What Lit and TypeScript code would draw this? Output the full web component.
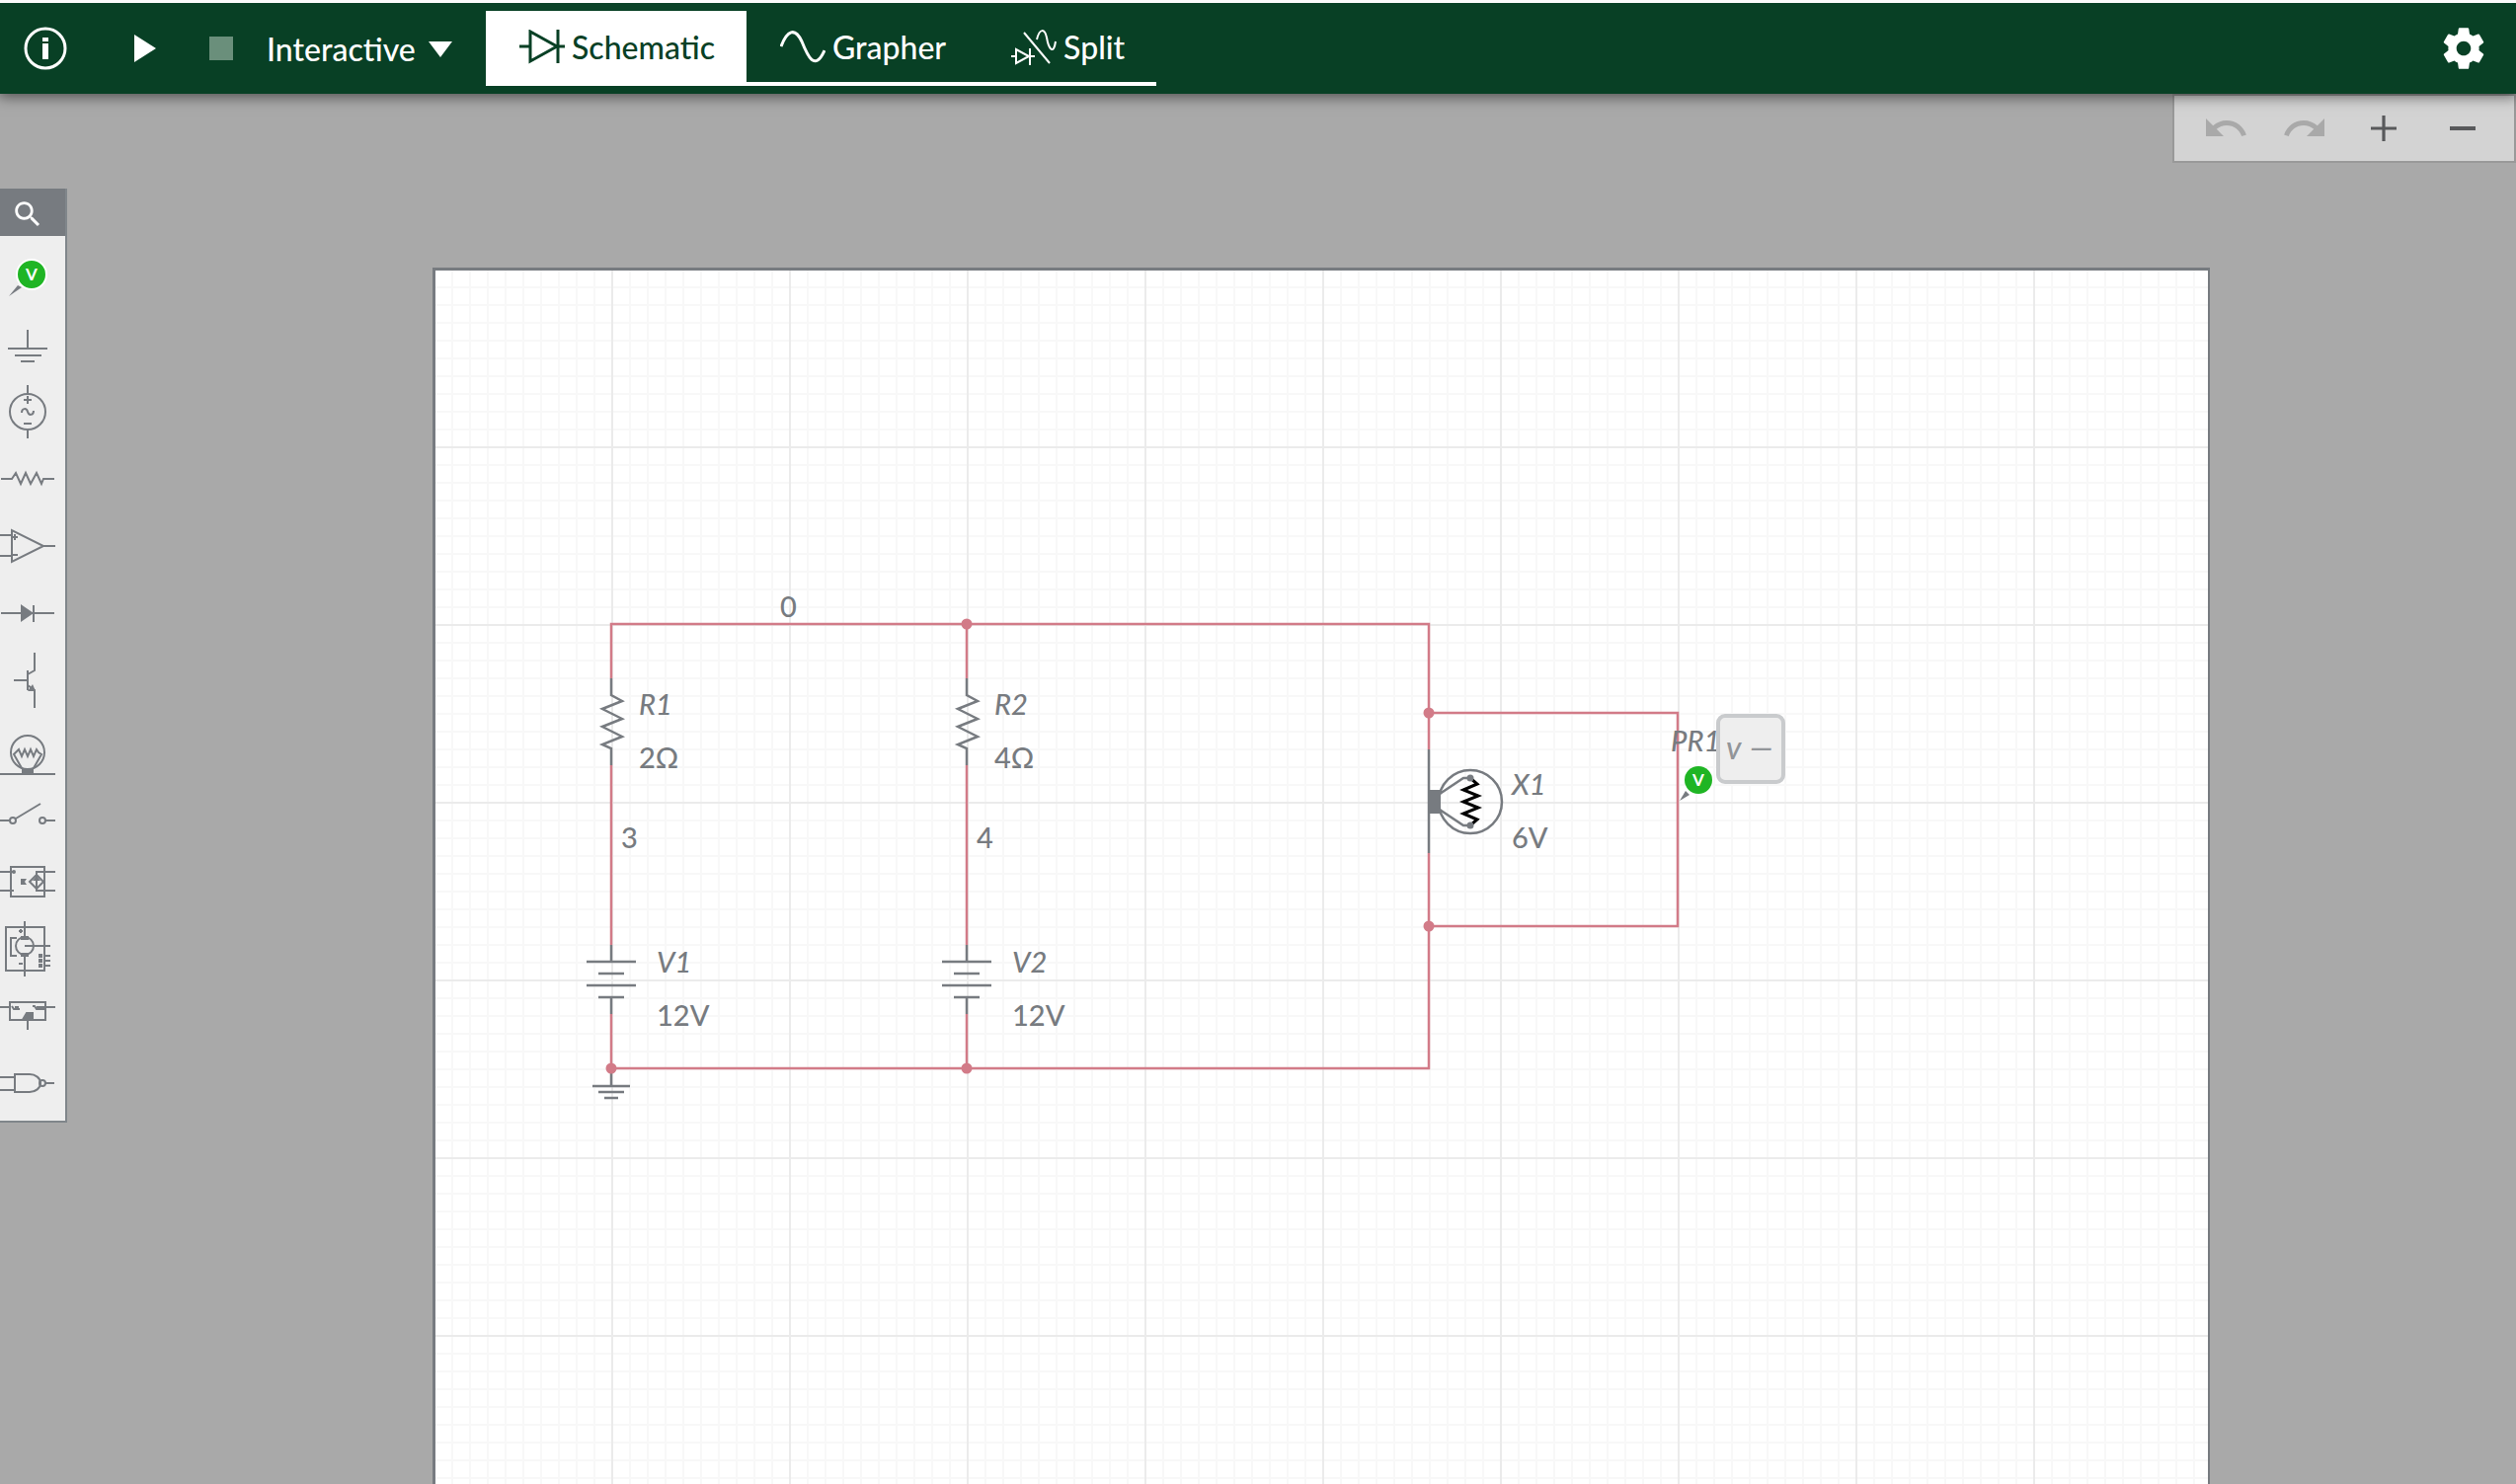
import { LitElement, html, css, svg } from "lit";
import { customElement, state } from "lit/decorators.js";

type Glyph = ReturnType<typeof svg>;

interface Part {
  name: string;
  glyph: Glyph;
}

const PARTS: Part[] = [
  {
    name: "Voltage probe",
    glyph: svg`
      <path class="fill" d="M9 53 L18 42 L22 44 Z" />
      <circle cx="32" cy="31" r="15" fill="#1fb524" stroke="#fff" stroke-width="2" />
      <text class="probe" x="32" y="37" text-anchor="middle">V</text>`,
  },
  {
    name: "Ground",
    glyph: svg`<path d="M28 19 V38 M8 38 H48 M15 45 H42 M21 51 H35" />`,
  },
  {
    name: "Sources",
    glyph: svg`
      <circle cx="28" cy="34" r="18" />
      <path d="M28 7 V16 M28 52 V61 M24 22 H32 M28 18 V26 M24 46 H32" />
      <path d="M22 35 C22 30 27 30 28 34 S34 38 34 33" />`,
  },
  {
    name: "Passive",
    glyph: svg`<path d="M1 34 H12 L16 28 L21 39 L26 28 L31 39 L37 28 L42 39 L44 34 H55" />`,
  },
  {
    name: "Analog",
    glyph: svg`
      <path d="M12 18 V50 L44 34 Z M44 34 H56 M0 23 H12 M0 44 H12" />
      <path d="M13 25 H18 M15 22 V28 M13 43 H18" />`,
  },
  {
    name: "Diodes",
    glyph: svg`
      <path d="M1 34 H55 M34 26 V43" />
      <path class="fill" d="M21 25 L34 34 L21 43 Z" />`,
  },
  {
    name: "Transistors",
    glyph: svg`
      <path d="M35 6 V24 L28 28 M28 24 V44 M14 34 H28 M28 39 L35 44 V62" />
      <path class="fill" d="M36 45 L28 45 L33 38 Z" />`,
  },
  {
    name: "Indicators",
    glyph: svg`
      <circle cx="28" cy="39" r="17" />
      <path d="M0 61 H56" />
      <rect class="fill" x="22" y="55" width="12" height="6" />
      <path d="M22 55 L14 41 L17 38 L19 36 L22 43 L25 36 L28 43 L31 36 L34 43 L37 36 L39 39 L42 41 L34 55" />`,
  },
  {
    name: "Switches",
    glyph: svg`
      <circle cx="13" cy="40" r="3" />
      <circle cx="43" cy="40" r="3" />
      <path d="M0 40 H10 M46 40 H56 M16 38 L41 23" />`,
  },
  {
    name: "Modeling blocks",
    glyph: svg`
      <path d="M11 19 H45 V49 H11 Z M0 24 H14 M0 43 H14" />
      <path d="M56 24 H37 V43 H56 M30 34 L37 27 L44 34 L37 41 Z" />
      <path class="fill" d="M33 33 L37 28 L41 33 Z M21 31 h6 l-2 3 l2 3 h-6 Z" />
      <circle class="fill" cx="14" cy="24" r="2" />`,
  },
  {
    name: "Electromechanical",
    glyph: svg`
      <path d="M6 12 H45 V56 H6 Z M25 6 V22 M25 40 V62 M25 31 H51" />
      <circle cx="25" cy="31" r="9" />
      <path d="M17 23 H11 V41 H17 M45 41 H51 M45 46 H51 M45 51 H51" />
      <path d="M21 23 H29 M21 40 H29" stroke-width="4" />
      <path d="M19 16 H23 M21 14 V18 M19 49 H23" />
      <path d="M41 39 V53" stroke-width="4" stroke-dasharray="4 1" />`,
  },
  {
    name: "Power",
    glyph: svg`
      <path d="M10 20 H46 V38 H10 Z M0 25 H10 M46 25 H56 M28 38 V48" />
      <path d="M12 24 L14 27 H20 M33 24 H35 L37 27 H44 V24 M24 36 L27 31 H33 V36 Z" />
      <path d="M15 26 H19 M37 26 H43 M26 34 H33" stroke-width="4" />`,
  },
  {
    name: "Digital",
    glyph: svg`
      <path d="M15 25 H30 C36 25 41 29 41 34 S36 43 30 43 H15 Z M0 28 H15 M0 41 H15 M46 34 H55" />
      <circle cx="43" cy="34" r="3" />`,
  },
];

const UNDO =
  "M12.5 8c-2.65 0-5.05.99-6.9 2.6L2 7v9h9l-3.62-3.62c1.39-1.16 3.16-1.88 5.12-1.88 3.54 0 6.55 2.31 7.6 5.5l2.37-.78C21.08 11.03 17.15 8 12.5 8z";
const REDO =
  "M18.4 10.6C16.55 8.99 14.15 8 11.5 8c-4.65 0-8.58 3.03-9.96 7.22L3.9 16c1.05-3.19 4.05-5.5 7.6-5.5 1.95 0 3.73.72 5.12 1.88L13 16h9V7l-3.6 3.6z";
const GEAR =
  "M19.43 12.98c.04-.32.07-.64.07-.98s-.03-.66-.07-.98l2.11-1.65c.19-.15.24-.42.12-.64l-2-3.46c-.12-.22-.39-.3-.61-.22l-2.49 1c-.52-.4-1.08-.73-1.69-.98l-.38-2.65C14.46 2.18 14.25 2 14 2h-4c-.25 0-.46.18-.49.42l-.38 2.65c-.61.25-1.17.59-1.69.98l-2.49-1c-.23-.09-.49 0-.61.22l-2 3.46c-.13.22-.07.49.12.64l2.11 1.65c-.04.32-.07.65-.07.98s.03.66.07.98l-2.11 1.65c-.19.15-.24.42-.12.64l2 3.46c.12.22.39.3.61.22l2.49-1c.52.4 1.08.73 1.69.98l.38 2.65c.03.24.24.42.49.42h4c.25 0 .46-.18.49-.42l.38-2.65c.61-.25 1.17-.59 1.69-.98l2.49 1c.23.09.49 0 .61-.22l2-3.46c.12-.22.07-.49-.12-.64l-2.11-1.65zM12 15.5c-1.93 0-3.5-1.57-3.5-3.5s1.57-3.5 3.5-3.5 3.5 1.57 3.5 3.5-1.57 3.5-3.5 3.5z";
const SEARCH =
  "M15.5 14h-.79l-.28-.27C15.41 12.59 16 11.11 16 9.5 16 5.91 13.09 3 9.5 3S3 5.91 3 9.5 5.91 16 9.5 16c1.61 0 3.09-.59 4.23-1.57l.27.28v.79l5 4.99L20.49 19l-4.99-5zm-6 0C7.01 14 5 11.99 5 9.5S7.01 5 9.5 5 14 7.01 14 9.5 11.99 14 9.5 14z";

const reset = css`
  :host {
    display: block;
    font-family: Lato, "Open Sans", sans-serif;
    font-weight: 500;
  }
  button,
  select {
    display: flex;
    align-items: center;
    justify-content: center;
    margin: 0;
    padding: 0;
    border: 0;
    background: none;
    color: inherit;
    font: inherit;
  }
  svg {
    display: block;
    flex: none;
  }
`;

@customElement("top-bar")
export class TopBar extends LitElement {
  @state() private view = "Schematic";

  static styles = [
    reset,
    css`
      .bar {
        display: flex;
        align-items: center;
        height: 92px;
        padding: 0 28px 0 24px;
        background: #084025;
        color: #fff;
        font-size: 32px;
        line-height: 40px;
        box-shadow: 0 0 14px 2px rgba(0, 0, 0, 0.6);
      }
      .info {
        width: 44px;
      }
      .run {
        margin-left: 54px;
        width: 50px;
      }
      .stop {
        margin-left: 28px;
        width: 48px;
      }
      .mode {
        display: flex;
        align-items: center;
        gap: 12px;
        margin: 2px 34px 0 22px;
      }
      .mode select {
        appearance: none;
        width: 152px;
      }
      .tabs {
        display: flex;
        height: 76px;
        box-sizing: border-box;
        box-shadow: inset 0 -4px #fff;
      }
      .tab {
        gap: 7px;
        padding: 0 32px 3px 34px;
      }
      .tab.on {
        background: #fff;
        color: #084025;
      }
      .settings {
        margin-left: auto;
      }
    `,
  ];

  private glyphs: Record<string, Glyph> = {
    Schematic: svg`<path d="M0 17 H10 M11 2 V32 L38 17 Z M39 0 V34 M39 17 H46" stroke-width="3" />`,
    Grapher: svg`<path d="M1 17 C7 1 15 -3 22 12 C28 27 35 43 45 21" stroke-width="3" />`,
    Split: svg`
      <path d="M0 27 H5 M5 20 V34 L18 27 Z M19 19 V36 M19 27 H24" stroke-width="2" />
      <path d="M13 3 L39 34" stroke-width="2" />
      <path d="M26 10 C29 -2 34 -1 36 8 C38 20 43 26 45 12" stroke-width="2" />`,
  };

  render() {
    return html`
      <header class="bar">
        <button class="info" aria-label="Information">
          <svg width="44" height="44" viewBox="0 0 44 44" fill="#fff">
            <circle cx="22" cy="22" r="20" fill="none" stroke="#fff" stroke-width="3" />
            <rect x="19" y="11" width="6" height="4" />
            <rect x="19" y="17" width="6" height="16" />
          </svg>
        </button>
        <button class="run" aria-label="Run simulation">
          <svg width="22" height="28" viewBox="0 0 22 28"><path d="M0 0 L22 14 L0 28 Z" fill="#fff" /></svg>
        </button>
        <button class="stop" aria-label="Stop simulation" disabled>
          <svg width="24" height="24" viewBox="0 0 24 24"><path d="M0 0 H24 V24 H0 Z" fill="#6a8f7b" /></svg>
        </button>
        <label class="mode">
          <select aria-label="Simulation mode">
            <option>Interactive</option>
            <option>Transient</option>
            <option>AC Sweep</option>
          </select>
          <svg width="24" height="16" viewBox="0 0 24 16"><path d="M0 0 H24 L12 16 Z" fill="#fff" /></svg>
        </label>
        <nav class="tabs" role="tablist">
          ${Object.keys(this.glyphs).map(
            (name) => html`
              <button
                class="tab ${name === this.view ? "on" : ""}"
                role="tab"
                aria-selected=${name === this.view}
                @click=${() => (this.view = name)}
              >
                <svg width="46" height="36" viewBox="0 0 46 36" fill="none" stroke="currentColor">
                  ${this.glyphs[name]}
                </svg>
                ${name}
              </button>
            `,
          )}
        </nav>
        <button class="settings" aria-label="Settings">
          <svg width="50" height="50" viewBox="0 0 24 24"><path d=${GEAR} fill="#fff" /></svg>
        </button>
      </header>
    `;
  }
}

@customElement("part-palette")
export class PartPalette extends LitElement {
  static styles = [
    reset,
    css`
      .palette {
        display: flex;
        flex-direction: column;
        padding-bottom: 4px;
        background: #eee;
        border: solid #80868b;
        border-width: 0 2px 2px 0;
      }
      .search {
        height: 48px;
        box-sizing: border-box;
        margin-bottom: 8px;
        padding: 3px 10px 0 0;
        background: #777b80;
      }
      .part {
        height: 68px;
      }
      .part svg {
        width: 66px;
        height: 68px;
        fill: none;
        stroke: #777b80;
        stroke-width: 2;
      }
      .part .fill {
        fill: #777b80;
        stroke: none;
      }
      .probe {
        fill: #fff;
        stroke: none;
        font-size: 17px;
        font-weight: 700;
      }
    `,
  ];

  render() {
    return html`
      <nav class="palette" aria-label="Components">
        <button class="search" aria-label="Search components">
          <svg width="34" height="34" viewBox="0 0 24 24"><path d=${SEARCH} fill="#fff" /></svg>
        </button>
        ${PARTS.map(
          (p) => html`
            <button class="part" aria-label=${p.name}>
              <svg viewBox="0 0 66 68">${p.glyph}</svg>
            </button>
          `,
        )}
      </nav>
    `;
  }
}

@customElement("edit-tools")
export class EditTools extends LitElement {
  static styles = [
    reset,
    css`
      .tools {
        display: flex;
        padding: 0 12px;
        background: #d3d3d3;
        border: 2px solid #999;
      }
      .tool {
        width: 80px;
        height: 66px;
        color: #58595b;
      }
      .tool:disabled {
        color: #a9a9a9;
      }
    `,
  ];

  render() {
    const tools = [
      { name: "Undo", d: UNDO, off: true },
      { name: "Redo", d: REDO, off: true },
      { name: "Zoom in", d: "M5.5 11.2h5.7V5.5h1.6v5.7h5.7v1.6h-5.7v5.7h-1.6v-5.7H5.5z", off: false },
      { name: "Zoom out", d: "M5.5 11h13v2h-13z", off: false },
    ];
    return html`
      <div class="tools" role="toolbar">
        ${tools.map(
          (t) => html`
            <button class="tool" aria-label=${t.name} ?disabled=${t.off}>
              <svg width="48" height="48" viewBox="0 0 24 24"><path d=${t.d} fill="currentColor" /></svg>
            </button>
          `,
        )}
      </div>
    `;
  }
}

@customElement("circuit-sheet")
export class CircuitSheet extends LitElement {
  static styles = css`
    :host {
      display: block;
      overflow: hidden;
      border: solid #777b80;
      border-width: 3px 2px 0 3px;
      background-color: #fff;
      background-image: linear-gradient(90deg, #ebebeb 2px, transparent 2px),
        linear-gradient(#ebebeb 2px, transparent 2px), linear-gradient(90deg, #f8f8f8 2px, transparent 2px),
        linear-gradient(#f8f8f8 2px, transparent 2px);
      background-size:
        180px 180px,
        180px 180px,
        18px 18px,
        18px 18px;
      background-position: -2px -2px;
      font-family: Lato, "Open Sans", sans-serif;
      font-weight: 500;
    }
    .circuit {
      display: block;
      width: 100%;
      height: 100%;
      fill: none;
      stroke-width: 2.5;
      stroke: #777b80;
    }
    .wire {
      stroke: #d27b88;
    }
    .node {
      fill: #d27b88;
      stroke: none;
    }
    .solid {
      fill: #777b80;
      stroke: none;
    }
    .filament {
      stroke: #000;
      stroke-width: 3;
    }
    .text {
      fill: #777b80;
      stroke: none;
      font-size: 29px;
    }
    .name {
      font-style: italic;
    }
    .probe {
      fill: #fff;
      stroke: none;
      font-size: 17px;
      font-weight: 700;
    }
    .readout {
      fill: #eee;
      stroke: #c9cbcd;
      stroke-width: 4;
    }
    .reading {
      fill: #929599;
      font-size: 32px;
    }
  `;

  private resistor(x: number, name: string, value: string) {
    return svg`
      <g transform="translate(${x} 0)">
        <path d="M0 415 V432 L11 438 L-9 446 L11 456 L-9 464 L11 474 L-9 482 L0 486 V503" />
        <text class="text name" x="28" y="452">${name}</text>
        <text class="text" x="28" y="506">${value}</text>
      </g>`;
  }

  private battery(x: number, name: string, value: string) {
    return svg`
      <g transform="translate(${x} 0)">
        <path d="M0 685 V702 M-25 702 H25 M-13 714 H13 M-25 726 H25 M-13 738 H13 M0 738 V755" />
        <text class="text name" x="46" y="713">${name}</text>
        <text class="text" x="46" y="767">${value}</text>
      </g>`;
  }

  render() {
    const nodes = [
      [540, 360],
      [1008, 450],
      [1008, 666],
      [180, 810],
      [540, 810],
    ];
    return html`
      <svg class="circuit" role="img" aria-label="Circuit schematic">
        <g transform="translate(-2 -2)">
          <path d="M180 810 V828 M161 828 H199 M167 834 H193 M173 840 H187" />
          <path
            class="wire"
            d="M180 415 V360 H1008 V487 M540 360 V415 M180 503 V685 M540 503 V685 M180 755 V810 H1008 V592 M540 755 V810 M1008 450 H1260 V666 H1008"
          />
          ${nodes.map(([x, y]) => svg`<circle class="node" cx=${x} cy=${y} r="5.5" />`)}
          ${this.resistor(180, "R1", "2Ω")} ${this.resistor(540, "R2", "4Ω")}
          ${this.battery(180, "V1", "12V")} ${this.battery(540, "V2", "12V")}
          <text class="text" x="351" y="353">0</text>
          <text class="text" x="190" y="587">3</text>
          <text class="text" x="550" y="587">4</text>

          <path d="M1008 487 V592 M1019 532 L1043 516 H1050 M1019 548 L1043 564 H1050" />
          <circle cx="1050" cy="540" r="32" />
          <rect class="solid" x="1007" y="528" width="13" height="24" />
          <path class="filament" d="M1050 516 L1057 522 L1043 528 L1058 534 L1043 540 L1058 546 L1043 552 L1057 558 L1050 564" />
          <circle class="solid" cx="1050" cy="516" r="3.5" />
          <circle class="solid" cx="1050" cy="564" r="3.5" />
          <text class="text name" x="1092" y="533">X1</text>
          <text class="text" x="1092" y="587">6V</text>

          <text class="text name" x="1253" y="489">PR1</text>
          <path class="solid" d="M1262 539 L1268 529 L1272 533 Z" />
          <circle cx="1281" cy="518" r="14" fill="#1fb524" stroke="none" />
          <text class="probe" x="1281" y="524" text-anchor="middle">V</text>
          <rect class="readout" x="1301" y="453" width="66" height="67" rx="7" />
          <text class="text name reading" x="1309" y="497">v</text>
          <text class="text name reading" x="1333" y="497">—</text>
        </g>
      </svg>
    `;
  }
}

@customElement("app-root")
export class AppRoot extends LitElement {
  static styles = css`
    :host {
      display: flex;
      flex-direction: column;
      height: 100vh;
      border-top: 3px solid #fafafa;
      box-sizing: border-box;
      overflow: hidden;
      background: #a9a9a9;
    }
    .top {
      flex: none;
      z-index: 1;
    }
    .desk {
      display: flex;
      align-items: flex-start;
      flex: 1;
      min-height: 0;
      position: relative;
    }
    .parts {
      flex: none;
      width: 68px;
      margin-top: 96px;
    }
    .sheet {
      flex: 1;
      align-self: stretch;
      margin: 176px 310px 0 370px;
    }
    .edit {
      position: absolute;
      top: 0;
      right: 0;
    }
  `;

  render() {
    return html`
      <top-bar class="top"></top-bar>
      <main class="desk">
        <part-palette class="parts"></part-palette>
        <circuit-sheet class="sheet"></circuit-sheet>
        <edit-tools class="edit"></edit-tools>
      </main>
    `;
  }
}
